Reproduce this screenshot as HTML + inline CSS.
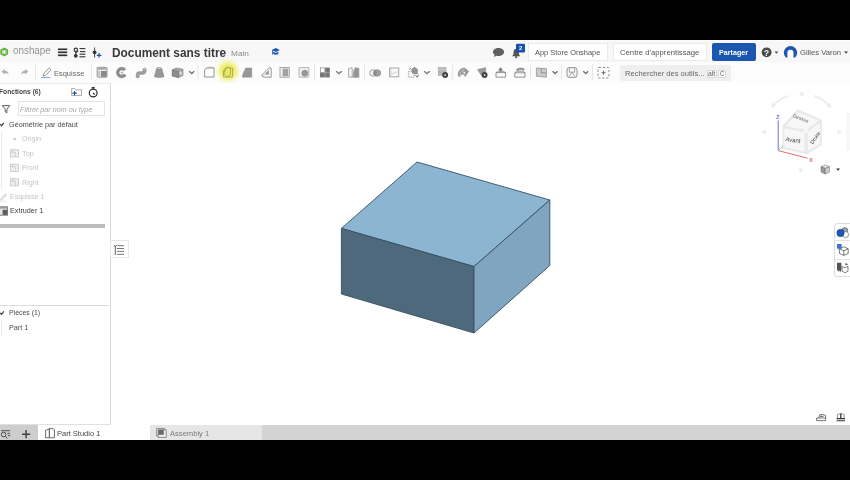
<!DOCTYPE html>
<html lang="fr">
<head>
<meta charset="utf-8">
<title>Document sans titre</title>
<style>
*{box-sizing:border-box;margin:0;padding:0}
html,body{width:850px;height:480px;overflow:hidden;background:#000;font-family:"Liberation Sans",sans-serif;}
#app{position:absolute;left:0;top:0;width:850px;height:480px;overflow:hidden;filter:blur(0.45px);}
.a{position:absolute}
.t{position:absolute;white-space:nowrap}
</style>
</head>
<body>
<div id="app">
<div class="a" style="left:0;top:40px;width:850px;height:400px;background:#fff"></div>
<!-- header -->
<div class="a" style="left:0;top:40px;width:850px;height:21.600px;background:linear-gradient(#fff 0,#f7f7f7 1.500px,#f7f7f7 100%)"></div>
<!-- toolbar -->
<div class="a" style="left:0;top:61.600px;width:850px;height:21.400px;background:#fcfcfc"></div>
<!-- yellow cursor highlight -->
<div class="a" style="left:213.5px;top:57.400px;width:28px;height:28px;border-radius:50%;background:radial-gradient(circle closest-side,rgba(232,232,86,0.95) 0%,rgba(235,235,96,0.92) 40%,rgba(240,240,124,0.66) 62%,rgba(246,246,165,0.3) 80%,rgba(255,255,220,0) 100%)"></div>
<!-- header buttons -->
<div class="a" style="left:528px;top:43px;width:80px;height:18px;background:#fff;border:1px solid #ebebeb"></div>
<div class="a" style="left:613px;top:43px;width:94px;height:18px;background:#fff;border:1px solid #ebebeb"></div>
<div class="a" style="left:711.5px;top:42.5px;width:44px;height:18.5px;background:#1b57b1;border-radius:2px"></div>
<!-- search tools -->
<div class="a" style="left:620px;top:64.5px;width:111px;height:16.5px;background:#efefef;border-radius:2px"></div>
<div class="a" style="left:706.800px;top:69.600px;width:10.200px;height:8px;background:#fbfbfb;border:0.6px solid #d8d8d8;border-radius:1px"></div>
<div class="a" style="left:717.500px;top:69.600px;width:8.300px;height:8px;background:#fbfbfb;border:0.6px solid #d8d8d8;border-radius:1px"></div>
<!-- left panel -->
<div class="a" style="left:0;top:83px;width:111px;height:342px;background:#fff;border-right:1px solid #d9d9d9;border-top:1px solid #ececec;border-bottom:1px solid #e0e0e0"></div>
<div class="a" style="left:17.5px;top:101px;width:87.5px;height:15.200px;border:1px solid #e4e4e4;background:#fff"></div>
<div class="a" style="left:0;top:223.8px;width:105px;height:4.2px;background:#bdbdbd"></div>
<div class="a" style="left:0;top:305px;width:109px;height:1px;background:#dcdcdc"></div>
<div class="a" style="left:1.3px;top:132px;width:1px;height:57px;background:#e9e9e9"></div>
<div class="a" style="left:1.3px;top:320px;width:1px;height:16px;background:#e9e9e9"></div>
<!-- panel toggle button -->
<div class="a" style="left:110px;top:239.900px;width:19.200px;height:18.600px;background:#fff;border:1px solid #e6e6e6"></div>
<!-- right panel -->
<div class="a" style="left:833.5px;top:222.5px;width:20px;height:54.5px;background:#fff;border:1px solid #dcdcdc;border-radius:3px"></div>
<div class="a" style="left:834px;top:240.3px;width:16px;height:1px;background:#e4e4e4"></div>
<div class="a" style="left:834px;top:259px;width:16px;height:1px;background:#e4e4e4"></div>
<!-- tab bar -->
<div class="a" style="left:0;top:425px;width:850px;height:15px;background:#d3d3d3"></div>
<div class="a" style="left:0;top:425px;width:38px;height:15px;background:#cdcdcd"></div>
<div class="a" style="left:38px;top:425px;width:112px;height:15px;background:#fff"></div>
<div class="a" style="left:150px;top:425px;width:112px;height:15px;background:#e6e6e6"></div>
<div class="t" id="t_on" style="left:13.2px;top:44.30px;height:12px;line-height:12px;font-size:11px;color:#939393;transform:scaleX(0.8953);transform-origin:0 50%;">onshape</div>
<div class="t" id="t_doc" style="left:111.7px;top:46.80px;height:12px;line-height:12px;font-size:12px;color:#3a3a3a;font-weight:bold;transform:scaleX(0.9891);transform-origin:0 50%;">Document sans titre</div>
<div class="t" id="t_main" style="left:231.4px;top:48.20px;height:12px;line-height:12px;font-size:8px;color:#8a8a8a;transform:scaleX(1.0321);transform-origin:0 50%;">Main</div>
<div class="t" id="t_app" style="left:535.3px;top:46.60px;height:12px;line-height:12px;font-size:8px;color:#555;transform:scaleX(0.9305);transform-origin:0 50%;">App Store Onshape</div>
<div class="t" id="t_cen" style="left:620px;top:46.60px;height:12px;line-height:12px;font-size:8px;color:#555;transform:scaleX(0.9628);transform-origin:0 50%;">Centre d'apprentissage</div>
<div class="t" id="t_par" style="left:719px;top:46.60px;height:12px;line-height:12px;font-size:7.8px;color:#fff;font-weight:bold;transform:scaleX(0.9165);transform-origin:0 50%;">Partager</div>
<div class="t" id="t_gil" style="left:800px;top:46.60px;height:12px;line-height:12px;font-size:8px;color:#555;transform:scaleX(0.9538);transform-origin:0 50%;">Gilles Varon</div>
<div class="t" id="t_esq" style="left:53.8px;top:67.60px;height:12px;line-height:12px;font-size:8px;color:#666;transform:scaleX(0.9332);transform-origin:0 50%;">Esquisse</div>
<div class="t" id="t_rech" style="left:625px;top:67.60px;height:12px;line-height:12px;font-size:8px;color:#666;transform:scaleX(0.9471);transform-origin:0 50%;">Rechercher des outils...</div>
<div class="t" id="t_alt" style="left:708.2px;top:67.80px;height:12px;line-height:12px;font-size:6.4px;color:#5a5a5a;transform:scaleX(1.0667);transform-origin:0 50%;">alt</div>
<div class="t" id="t_c" style="left:719.6px;top:67.80px;height:12px;line-height:12px;font-size:6.4px;color:#5a5a5a;transform:scaleX(0.9081);transform-origin:0 50%;">C</div>
<div class="t" id="t_fon" style="left:-1px;top:86.30px;height:12px;line-height:12px;font-size:7.8px;color:#444;font-weight:bold;transform:scaleX(0.8539);transform-origin:0 50%;">Fonctions (6)</div>
<div class="t" id="t_fil" style="left:20.3px;top:103.60px;height:12px;line-height:12px;font-size:7.6px;color:#a8a8a8;font-style:italic;transform:scaleX(0.9465);transform-origin:0 50%;">Filtrer par nom ou type</div>
<div class="t" id="t_geo" style="left:8.7px;top:119.10px;height:12px;line-height:12px;font-size:8px;color:#4a4a4a;transform:scaleX(0.9099);transform-origin:0 50%;">Géométrie par défaut</div>
<div class="t" id="t_ori" style="left:21.7px;top:133.10px;height:12px;line-height:12px;font-size:8px;color:#c4c4c4;transform:scaleX(0.8949);transform-origin:0 50%;">Origin</div>
<div class="t" id="t_top" style="left:22px;top:147.80px;height:12px;line-height:12px;font-size:8px;color:#c4c4c4;transform:scaleX(0.9143);transform-origin:0 50%;">Top</div>
<div class="t" id="t_fro" style="left:21.8px;top:162.10px;height:12px;line-height:12px;font-size:8px;color:#c4c4c4;transform:scaleX(0.8944);transform-origin:0 50%;">Front</div>
<div class="t" id="t_rig" style="left:21.8px;top:176.60px;height:12px;line-height:12px;font-size:8px;color:#c4c4c4;transform:scaleX(0.8936);transform-origin:0 50%;">Right</div>
<div class="t" id="t_es1" style="left:10.3px;top:191.10px;height:12px;line-height:12px;font-size:8px;color:#c4c4c4;transform:scaleX(0.8789);transform-origin:0 50%;">Esquisse 1</div>
<div class="t" id="t_ex1" style="left:10.3px;top:205.30px;height:12px;line-height:12px;font-size:8px;color:#3c3c3c;transform:scaleX(0.9023);transform-origin:0 50%;">Extruder 1</div>
<div class="t" id="t_pie" style="left:8.7px;top:307.40px;height:12px;line-height:12px;font-size:8px;color:#4a4a4a;transform:scaleX(0.8635);transform-origin:0 50%;">Pièces (1)</div>
<div class="t" id="t_pa1" style="left:8.7px;top:322.00px;height:12px;line-height:12px;font-size:8px;color:#4a4a4a;transform:scaleX(0.9042);transform-origin:0 50%;">Part 1</div>
<div class="t" id="t_ps1" style="left:56.8px;top:428.00px;height:12px;line-height:12px;font-size:8px;color:#444;transform:scaleX(0.9384);transform-origin:0 50%;">Part Studio 1</div>
<div class="t" id="t_as1" style="left:169.5px;top:427.80px;height:12px;line-height:12px;font-size:8px;color:#7a7a7a;transform:scaleX(0.9478);transform-origin:0 50%;">Assembly 1</div>
<svg class="a" style="left:0;top:0" width="850" height="480" viewBox="0 0 850 480">
<!-- 3D box -->
<g stroke="#365062" stroke-width="0.9" stroke-linejoin="round">
  <polygon points="341.4,228.4 417,162 549.8,200 474,266.5" fill="#8bb5d1"/>
  <polygon points="341.4,228.4 474,266.5 474,333 341.4,294" fill="#4e697c"/>
  <polygon points="474,266.5 549.8,200 549.8,265.5 474,333" fill="#80a5c1"/>
</g>

<!-- ===== header icons ===== -->
<!-- onshape logo -->
<g fill="none" stroke="#62b83a" stroke-width="1.900" stroke-linejoin="round">
  <polygon points="4.200,48.500 7.200,50.200 7.200,53.600 4.200,55.300 1.200,53.600 1.200,50.200"/>
</g>
<polygon points="4.200,50.500 5.500,51.200 5.500,52.700 4.200,53.400 2.900,52.700 2.900,51.200" fill="#fff" stroke="#9a9a9a" stroke-width="0.600"/>
<!-- hamburger -->
<g stroke="#333" stroke-width="1.7">
  <line x1="58" y1="49.3" x2="67.2" y2="49.3"/><line x1="58" y1="52.3" x2="67.2" y2="52.3"/><line x1="58" y1="55.3" x2="67.2" y2="55.3"/>
</g>
<!-- tree icon -->
<g stroke="#333" stroke-width="1.1" fill="none">
  <circle cx="75.8" cy="49.8" r="1.7"/><circle cx="75.8" cy="55.8" r="1.3" fill="#333"/>
  <line x1="75.8" y1="51.5" x2="75.8" y2="54.5"/>
  <path d="M75.8 53 q0 -1.5 2.5 -1.5"/>
  <line x1="79.5" y1="48.6" x2="85.4" y2="48.6"/><line x1="80" y1="51.6" x2="85.4" y2="51.6"/><line x1="79.5" y1="54.2" x2="85.4" y2="54.2"/><line x1="79.5" y1="56.8" x2="85.4" y2="56.8"/>
</g>
<!-- insert icon -->
<g>
  <line x1="94.6" y1="47.5" x2="94.6" y2="57.5" stroke="#333" stroke-width="0.9"/>
  <circle cx="94.6" cy="52.3" r="1.9" fill="#333"/>
  <path d="M96.8 55.3h4.6M99.1 53v4.6" stroke="#1b57b1" stroke-width="1.3" fill="none"/>
</g>
<!-- graduation cap -->
<g fill="#1b57b1">
  <polygon points="271.8,50 275.8,48 279.8,50 275.8,52"/>
  <path d="M273.2 51.6v2.2q2.6 1.8 5.2 0v-2.2l-2.6 1.3z"/>
  <rect x="272" y="50" width="0.8" height="4.6"/>
</g>
<!-- comment bubble -->
<path d="M498.5 48c3.1 0 5.6 1.8 5.6 4s-2.500 4-5.600 4c-.7 0-1.400-.1-2-.3l-2.700 1.200 .8-2.300c-1-.7-1.700-1.600-1.700-2.600 0-2.200 2.500-4 5.600-4z" fill="#606060"/>
<!-- bell -->
<path d="M512 56.200c1.200-1 1.600-2.200 1.600-4 0-2 1-3.400 2.600-3.400s2.600 1.400 2.600 3.400c0 1.800 .4 3 1.600 4z" fill="#555"/>
<circle cx="516.2" cy="57.200" r="1.100" fill="#555"/>
<rect x="516" y="43.800" width="9" height="8.800" rx="1" fill="#1a4fb4"/>
<!-- help -->
<circle cx="766.600" cy="52.300" r="4.900" fill="#4a4a4a"/>
<polygon points="774.600,51.600 778.200,51.600 776.400,53.800" fill="#444"/>
<!-- avatar -->
<path d="M785.800 57.400a6.700 6.700 0 1 1 9.400 0z" fill="#1b57b1"/>
<path d="M787.400 58.200v-5.400a3.050 3.050 0 0 1 6.100 0v5.400z" fill="#fff"/>
<polygon points="844,51.400 848,51.400 846,53.700" fill="#444"/>

<!-- ===== toolbar icons ===== -->
<g opacity="0.78">
<!-- undo / redo -->
<path d="M1.5 71.600l3.300-2.600v1.700c2.600 0 3.800 1.600 3.600 4.300-.6-1.500-1.600-2.100-3.600-2.100v1.700z" fill="#9b9b9b"/>
<path d="M28.300 71.600l-3.300-2.600v1.700c-2.600 0-3.800 1.600-3.600 4.300 .6-1.500 1.600-2.100 3.600-2.100v1.700z" fill="#9b9b9b"/>
<g stroke="#dedede" stroke-width="1">
<line x1="35.500" y1="64.500" x2="35.500" y2="79.500"/><line x1="91.500" y1="64.500" x2="91.500" y2="79.500"/>
<line x1="198" y1="64.500" x2="198" y2="79.500"/><line x1="314.500" y1="64.500" x2="314.500" y2="79.500"/>
<line x1="364.500" y1="64.500" x2="364.500" y2="79.500"/><line x1="452.300" y1="64.500" x2="452.300" y2="79.500"/>
<line x1="530.500" y1="64.500" x2="530.500" y2="79.500"/><line x1="561.700" y1="64.500" x2="561.700" y2="79.500"/>
<line x1="592.600" y1="64.500" x2="592.600" y2="79.500"/>
</g>
<!-- pencil -->
<path d="M43 76l.8-2.600 5.400-5.400 1.800 1.800-5.400 5.400z" fill="none" stroke="#555" stroke-width="0.800" stroke-linejoin="round"/>
<line x1="41.300" y1="77.500" x2="50.500" y2="77.500" stroke="#3a6fc4" stroke-width="0.800"/>
<!-- extrude -->
<g>
<rect x="97.200" y="67.400" width="9.800" height="9.800" rx="0.800" fill="#e9e9e9" stroke="#6a6a6a" stroke-width="0.900"/>
<rect x="97.600" y="67.800" width="9" height="2" fill="#9a9a9a"/>
<rect x="101" y="71" width="5.600" height="5.800" fill="#6a6a6a"/>
<rect x="98.300" y="71" width="1.800" height="5.800" fill="#b0b0b0"/>
</g>
<!-- revolve -->
<g>
<path d="M125.800 69.200a5.300 5.300 0 1 0 .4 6.200l-2.600-1.300a2.500 2.500 0 1 1-.2-3.400z" fill="#6e6e6e" stroke="#555" stroke-width="0.500"/>
<circle cx="121.800" cy="72.600" r="1.100" fill="#8a8a8a"/>
</g>
<!-- sweep -->
<path d="M136.300 77.400v-3.200c0-1.600 1.200-2.400 2.800-2.400h2.600c.9 0 1.400-.4 1.400-1.200v-1.600h3v2c0 2-1.400 3.300-3.600 3.300h-2.400c-.7 0-1 .3-1 .9v2.200z" fill="#8a8a8a" stroke="#5c5c5c" stroke-width="0.600"/>
<ellipse cx="144.600" cy="68.900" rx="1.600" ry="0.900" fill="#d8d8d8" stroke="#5c5c5c" stroke-width="0.500"/>
<!-- loft -->
<path d="M156.700 68.200h5l2.400 8.600c-3 1.100-6.700 1.100-9.800 0z" fill="#7a7a7a" stroke="#5a5a5a" stroke-width="0.500"/>
<ellipse cx="159.200" cy="68.300" rx="2.500" ry="0.900" fill="#cfcfcf" stroke="#5a5a5a" stroke-width="0.500"/>
<!-- thicken -->
<g stroke="#5a5a5a" stroke-width="0.600" stroke-linejoin="round">
<polygon points="172.300,69.800 176.300,68 183,69.200 183,75.600 178.600,77.600 172.300,76" fill="#8e8e8e"/>
<polygon points="172.300,69.800 178.600,71.200 178.600,77.600 172.300,76" fill="#6c6c6c"/>
<rect x="179.600" y="71.600" width="2.200" height="3" fill="#dcdcdc" stroke="none"/>
</g>
<path d="M189.200 71.300l2.500 2.300 2.500-2.300" fill="none" stroke="#4a4a4a" stroke-width="1.300"/>
<!-- fillet -->
<path d="M204.600 77v-6.200c0-1.600 1.200-2.800 2.800-2.800h6.600v9z" fill="#fdfdfd" stroke="#666" stroke-width="0.900" stroke-linejoin="round"/>
<path d="M205.600 69.300c.8-1.300 2-2 3.400-2h5" fill="none" stroke="#888" stroke-width="0.700"/>
<!-- chamfer + hand -->
<g fill="none" stroke="#8a8a3a" stroke-width="0.800" stroke-linejoin="round">
<path d="M223.400 77v-6l2.400-3h6.800v9z"/>
<path d="M225 72.400v-3.300c0-.9 1.400-.9 1.400 0v-1.400c0-.9 1.400-.9 1.400 0v.3c0-.9 1.400-.9 1.400 0v.6c0-.8 1.300-.8 1.300 0v4.600c0 2-1 3.200-2.800 3.200-1.500 0-2.200-.6-2.900-1.800l-1.400-2.400c-.4-.8.600-1.400 1.100-.7z" fill="#eaea66"/>
</g>
<!-- draft -->
<path d="M245.600 68h6.200v9.200h-9.400l.2-2.400z" fill="#7c7c7c" stroke="#666" stroke-width="0.400"/>
<!-- rib -->
<g stroke="#666" stroke-width="0.800" stroke-linejoin="round">
<path d="M262.200 74.600l6.600-6.600h2.400v9.200h-7z" fill="#f4f4f4"/>
<path d="M264.400 74.600l4.400-4.600v4.600z" fill="#777" stroke="none"/>
<path d="M261.400 74.800l1.800 2.400" fill="none"/>
</g>
<!-- shell -->
<rect x="280" y="67.600" width="9.200" height="9.600" fill="#f2f2f2" stroke="#777" stroke-width="0.800"/>
<rect x="282.600" y="68.600" width="5.600" height="7.600" fill="#8a8a8a"/>
<!-- hole -->
<rect x="299" y="67.600" width="9.800" height="9.600" rx="0.600" fill="#ececec" stroke="#8a8a8a" stroke-width="0.800"/>
<circle cx="304.800" cy="73.200" r="3" fill="#7a7a7a" stroke="#5f5f5f" stroke-width="0.500"/>
<!-- pattern -->
<rect x="320" y="67.600" width="9.800" height="9.800" fill="#505050"/>
<rect x="320.600" y="68.200" width="4" height="4" fill="#fff"/>
<path d="M325.100 67.600v9.800M320 72.700h9.800" stroke="#a8a8a8" stroke-width="0.600"/>
<path d="M336.200 71.300l2.700 2.400 2.700-2.400" fill="none" stroke="#4a4a4a" stroke-width="1.300"/>
<!-- mirror -->
<g stroke="#6a6a6a" stroke-width="0.700" stroke-linejoin="round">
<path d="M348.600 68.400l3.600-.6v9.400h-3.600z" fill="#f4f4f4"/>
<path d="M355 67.800l3.800.6v8.800h-3.800z" fill="#7a7a7a"/>
<path d="M352.800 77.200l1.400-7.600.8 7.600z" fill="#9a9a9a"/>
</g>
<!-- boolean -->
<ellipse cx="373.400" cy="73" rx="3.600" ry="3.200" fill="#f6f6f6" stroke="#666" stroke-width="0.800"/>
<ellipse cx="377" cy="73" rx="3.600" ry="3.200" fill="#8a8a8a" stroke="#666" stroke-width="0.800"/>
<path d="M375.200 70.300a3.300 3.200 0 0 1 0 5.400a3.300 3.200 0 0 1 0-5.400z" fill="#6a6a6a"/>
<!-- split -->
<rect x="389.600" y="68" width="9.200" height="8.800" fill="#f7f7f7" stroke="#7a7a7a" stroke-width="0.800"/>
<path d="M391 68v8.800M391 74l7.800-2.400" stroke="#9a9a9a" stroke-width="0.500" fill="none"/>
<!-- transform -->
<g stroke="#666" stroke-width="0.700" stroke-linejoin="round">
<rect x="408.400" y="71.600" width="5.800" height="5.600" fill="#f8f8f8" stroke-dasharray="1.400 0.800"/>
<polygon points="411.600,69.400 414.600,67.200 417.600,69.600 417.200,74 412.800,73.600" fill="#777"/>
<path d="M415.600 75.400l1.600 1.800 1.400-2.600" fill="none" stroke="#333" stroke-width="0.900"/>
<path d="M409.400 69.600l1.600-1.800" fill="none" stroke="#333" stroke-width="0.900"/>
</g>
<path d="M424.200 71.300l2.700 2.400 2.700-2.400" fill="none" stroke="#4a4a4a" stroke-width="1.300"/>
<!-- delete part -->
<rect x="438.200" y="67.600" width="7.800" height="7.800" fill="#a4a4a4" stroke="#7a7a7a" stroke-width="0.500"/>
<path d="M438.200 69.400h7.800" stroke="#c8c8c8" stroke-width="0.700"/>
<circle cx="445.200" cy="75" r="1.900" fill="#fff" stroke="#111" stroke-width="2.100"/>
<!-- modify fillet -->
<path d="M458 75.600c0-4.600 2.600-7.600 6.600-7.600l4 3.200-3.400 5.400-1.800-2.600c-1.600 0-3 1-3.600 2.800z" fill="#7e7e7e" stroke="#666" stroke-width="0.500"/>
<path d="M459.800 75.400c.2-3.200 2-5.400 4.600-5.800" stroke="#d0d0d0" stroke-width="0.700" fill="none"/>
<path d="M463 71.200l2.400 1 -1.200 2.600z" fill="#f4f4f4"/>
<!-- delete face -->
<path d="M477.400 69.400l8.400-1.800v6l-4.400 2.200z" fill="#7e7e7e" stroke="#6c6c6c" stroke-width="0.400"/>
<circle cx="484.600" cy="75" r="1.900" fill="#fff" stroke="#111" stroke-width="2.100"/>
<!-- move face -->
<g stroke="#555" stroke-width="0.800" stroke-linejoin="round">
<path d="M496 72.600h9.600v4.600h-9.600z" fill="#fafafa"/>
<path d="M496 72.600l2.600-1.400h4.400l2.600 1.400" fill="none"/>
<path d="M499.400 71.400v-1.600h-1.200l2.400-2.400 2.400 2.400h-1.200v1.600z" fill="#555" stroke="none"/>
</g>
<!-- replace face -->
<g stroke="#555" stroke-width="0.800" stroke-linejoin="round">
<path d="M514.800 72.800h10.200v4.400h-10.200z" fill="#fafafa"/>
<path d="M514.800 72.800l2.400-1.600h5.600l2.200 1.600" fill="none"/>
<path d="M516.400 69.600c2.200-1.800 5-2 7.800-.8l-.4 1.400c-2.400-1-4.800-.8-6.600.6z" fill="#777" stroke-width="0.500"/>
</g>
<!-- plane -->
<g stroke="#777" stroke-width="0.800" stroke-linejoin="round">
<path d="M536.400 68l10 .6v8.600l-10-1z" fill="#bdbdbd"/>
<path d="M541.200 68.400v4.200l5.200 .4" fill="none" stroke="#666"/>
</g>
<path d="M552.600 71.300l2.500 2.300 2.500-2.300" fill="none" stroke="#4a4a4a" stroke-width="1.300"/>
<!-- frame -->
<rect x="567" y="67.600" width="10" height="9.800" rx="2.200" fill="#f4f4f4" stroke="#666" stroke-width="0.900"/>
<path d="M569.400 67.800v4.400h5.200v-4.400M572 72.200l-2.800 4.400M572 72.200l3 4.400" fill="none" stroke="#777" stroke-width="0.800"/>
<path d="M583.200 71.300l2.500 2.300 2.500-2.300" fill="none" stroke="#4a4a4a" stroke-width="1.300"/>
<!-- select box -->
<rect x="598" y="67.400" width="11" height="10.600" rx="1" fill="none" stroke="#555" stroke-width="0.900" stroke-dasharray="2.200 1.800"/>
<path d="M601.400 72.700h4.200M603.500 70.600v4.200" stroke="#333" stroke-width="0.900"/>

</g>
<!-- ===== panel icons ===== -->
<!-- folder plus -->
<path d="M71.600 95.600v-7h3l1 1.300h5.900v5.700z" fill="none" stroke="#929a8e" stroke-width="0.800" stroke-linejoin="round"/>
<path d="M72.300 93.200h4.600M74.600 90.900v4.600" stroke="#2a4fb0" stroke-width="1.200" fill="none"/>
<!-- stopwatch -->
<circle cx="93.200" cy="93" r="3.900" fill="none" stroke="#2a2a2a" stroke-width="1.200"/>
<path d="M91.800 87.600h2.800M93.200 87.800v1.400M93.200 93l1.500 1.600" stroke="#2a2a2a" stroke-width="1.100" fill="none"/>
<!-- funnel -->
<path d="M2.400 105.600h7.400l-2.900 3.600v3.600l-1.600-1v-2.600z" fill="none" stroke="#4a4a4a" stroke-width="0.900" stroke-linejoin="round"/>
<!-- checks -->
<path d="M0.200 124.300l1.300 1.400 2.400-2.900" fill="none" stroke="#444" stroke-width="1.300"/>
<path d="M0.200 312.900l1.300 1.400 2.400-2.900" fill="none" stroke="#444" stroke-width="1.300"/>
<!-- origin dot -->
<circle cx="14.700" cy="139" r="1.300" fill="#c6c6c6"/>
<!-- plane icons -->
<g fill="#efefef" stroke="#c6c6c6" stroke-width="0.800">
<rect x="10.600" y="149.800" width="7.800" height="7.200"/><path d="M10.600 152.200h4.600v4.800M12.800 149.800v2.400" fill="none"/>
<rect x="10.600" y="164.200" width="7.800" height="7.200"/><path d="M10.600 166.600h4.600v4.800M12.800 164.200v2.400" fill="none"/>
<rect x="10.600" y="178.700" width="7.800" height="7.200"/><path d="M10.600 181.100h4.600v4.800M12.800 178.700v2.400" fill="none"/>
</g>
<!-- sketch pencil (light) -->
<path d="M0.400 200.400l.6-2.400 4.400-4.400 1.400 1.400-4.400 4.400z" fill="#e4e4e4" stroke="#d0d0d0" stroke-width="0.600"/>
<path d="M-1 201.200h7" stroke="#dcdcdc" stroke-width="0.700"/>
<!-- extrude feature icon -->
<rect x="-0.400" y="206.800" width="8" height="8.400" fill="#e2e2e2" stroke="#666" stroke-width="0.800"/>
<rect x="-0.400" y="206.800" width="8" height="1.800" fill="#9a9a9a"/>
<rect x="2.600" y="209.800" width="4.600" height="5" fill="#5c5c5c"/>
<!-- list toggle icon -->
<g stroke="#555" stroke-width="0.800" fill="none">
<path d="M117.400 245.700h6.600M116.800 248.500h7.200M116.800 251.400h7.200M116.800 254.300h7.200"/>
<path d="M115.300 246v9" stroke-width="0.900"/>
<path d="M113.900 245.200l1.400 1.300 1.400-1.300" stroke-width="0.900" stroke="#333"/>
</g>
<!-- ===== right panel icons ===== -->
<circle cx="844.800" cy="230.600" r="3" fill="#9aa0a8" stroke="#555" stroke-width="0.600"/>
<circle cx="845.600" cy="234.600" r="3" fill="#fdfdfd" stroke="#555" stroke-width="0.600"/>
<circle cx="840.500" cy="233" r="3.700" fill="#1f55b8" stroke="#173f8a" stroke-width="0.500"/>
<g fill="none" stroke="#444" stroke-width="0.700" stroke-linejoin="round">
<polygon points="839.400,248.800 843.800,246.800 848.200,248.800 848.200,253.400 843.800,255.400 839.400,253.400" fill="#fff"/>
<path d="M839.400 248.800l4.400 2 4.400-2M843.800 250.800v4.600"/>
</g>
<rect x="837" y="244" width="4.700" height="4.700" fill="#3a74d8"/>
<g fill="#555">
<path d="M837 262.800h4.400v6.400l-1.200 3.400-1-2.600-1 1.800-1.200-2.400z"/>
<path d="M842 266.400l3 1.400 3-1.400v4.800l-3 1.600-3-1.600z" fill="#fafafa" stroke="#555" stroke-width="0.700"/>
<path d="M845.400 263l2.800 1.200-2.800 1.200z"/>
</g>
<!-- ===== bottom-right icons ===== -->
<g fill="none" stroke="#555" stroke-width="0.800" stroke-linejoin="round">
<path d="M816.600 418h9v2.600h-9zM818.600 418l1.200-3.400h3.400l2.400 1v2.400"/>
<path d="M820 416.400h3.400" stroke-width="1.400" stroke="#777"/>
</g>
<g stroke="#333" fill="none">
<path d="M836.600 418.600h8.400M836.600 420.800h8.400" stroke-width="1.100"/>
<path d="M840.800 413.200v5.400" stroke-width="1.300"/>
<path d="M837.400 418v-3.400q1.600-1.400 3.400 0M844.200 418v-3.400q-1.600-1.400-3.400 0" stroke-width="0.700" stroke="#666"/>
</g>
<!-- ===== tab bar icons ===== -->
<g fill="none" stroke="#444" stroke-width="0.900">
<circle cx="3.600" cy="434.500" r="2.300"/><path d="M5.300 436.300l2 2.200M1 430.700h9M7.400 433.300h2.800M8 435.700h2.200"/>
</g>
<path d="M22 434.200h8.200M26.100 430.100v8.200" stroke="#444" stroke-width="1.500" fill="none"/>
<g fill="#fff" stroke="#444" stroke-width="0.800" stroke-linejoin="round">
<path d="M45.600 430.400l3.800-1.600v9h-3.800z"/><path d="M49.400 428.600h3.600l1.400 1.200v8h-5z"/>
</g>
<g stroke="#666" stroke-width="0.700" stroke-linejoin="round">
<rect x="156.600" y="428.400" width="8" height="7.600" fill="#f4f4f4"/>
<rect x="158.200" y="429.800" width="8" height="7.600" fill="#efefef"/>
<rect x="158.200" y="429.800" width="5.600" height="5" fill="#6a6a6a" stroke="none"/>
</g>

<!-- ===== view cube ===== -->
<g fill="#ececec">
<polygon points="801.700,90.800 804.200,95.600 799.200,95.600"/>
<polygon points="800.600,173.200 803.100,168.600 798.100,168.600"/>
<polygon points="761.200,132 765.600,129.400 765.600,134.600"/>
<polygon points="841.800,132 837.400,129.400 837.400,134.600"/>
</g>
<g fill="none" stroke="#eeeeee" stroke-width="2.200" stroke-linecap="butt">
<path d="M773.500 105.400q6-7.400 14.500-9.400"/>
<path d="M814 96q9 2.400 14.800 9.600"/>
</g>
<g fill="#ececec">
<polygon points="770.800,107.800 772,102.600 776.400,105.600"/>
<polygon points="831.400,108.200 830.200,102.800 826,106"/>
</g>
<g stroke="#e9e9e9" stroke-width="2.200" stroke-linejoin="round" fill="#e9e9e9">
<polygon points="783.600,126 798,110.600 820.800,120.600 820.800,144.200 806.600,153.200 783.600,148"/>
</g>
<g stroke="#f7f7f7" stroke-width="1.600" stroke-linejoin="round" fill="#f7f7f7">
<polygon points="786.800,125.800 798.400,113.200 817.400,120.800 806.200,128.600"/>
<polygon points="785.200,129.200 803.600,132.600 803.600,150.400 785.200,146.400"/>
<polygon points="808.600,132.600 819,124 819,143 808.600,149.600"/>
</g>
<circle cx="806" cy="130.400" r="2.600" fill="#f6f6f6"/>
<path d="M778.200 120.400v30.200" stroke="#7c7ce4" stroke-width="1.100" fill="none"/>
<path d="M778.200 150.600l29.400 7.600" stroke="#ea6a6a" stroke-width="1" fill="none"/>
<path d="M778.200 150.600l4.800-4.400" stroke="#6fd07a" stroke-width="0.900" fill="none"/>
<text x="793" y="142" font-family="Liberation Sans, sans-serif" font-size="6" fill="#484848" text-anchor="middle" transform="rotate(8 793 140)">Avant</text>
<text x="800.800" y="120" font-family="Liberation Sans, sans-serif" font-size="4.900" fill="#5a5a5a" text-anchor="middle" transform="rotate(21 800.800 118.300)">Dessus</text>
<text x="815.300" y="139.600" font-family="Liberation Sans, sans-serif" font-size="5.200" fill="#484848" text-anchor="middle" transform="rotate(-56 815.300 137.900)">Droite</text>
<text x="778" y="119.200" font-family="Liberation Sans, sans-serif" font-size="5.400" font-weight="bold" fill="#6868dc" text-anchor="middle">Z</text>
<text x="811" y="162.200" font-family="Liberation Sans, sans-serif" font-size="5.400" font-weight="bold" fill="#e86464" text-anchor="middle">X</text>
<!-- small cube + caret -->
<g stroke="#666" stroke-width="0.500" stroke-linejoin="round">
<polygon points="821,166.600 825.200,165 829.400,166.600 825.200,168.400" fill="#ececec"/>
<polygon points="821,166.600 825.200,168.400 825.200,174 821,172" fill="#9c9c9c"/>
<polygon points="825.200,168.400 829.400,166.600 829.400,172 825.200,174" fill="#cacaca"/>
</g>
<polygon points="836.200,168.600 840,168.600 838.100,170.800" fill="#333"/>
<rect x="847" y="113.500" width="4" height="36" fill="#f8f8f8" stroke="#ededed" stroke-width="0.500"/>
<text x="520.600" y="50.300" font-family="Liberation Sans, sans-serif" font-size="6" font-weight="bold" fill="#fff" text-anchor="middle">2</text>
<text x="766.500" y="55.500" font-family="Liberation Sans, sans-serif" font-size="8.400" font-weight="bold" fill="#fff" text-anchor="middle">?</text>
</svg>

</div>
<div class="a" style="left:0;top:0;width:850px;height:40px;background:#000"></div>
<div class="a" style="left:0;top:440px;width:850px;height:40px;background:#000"></div>
</body>
</html>
